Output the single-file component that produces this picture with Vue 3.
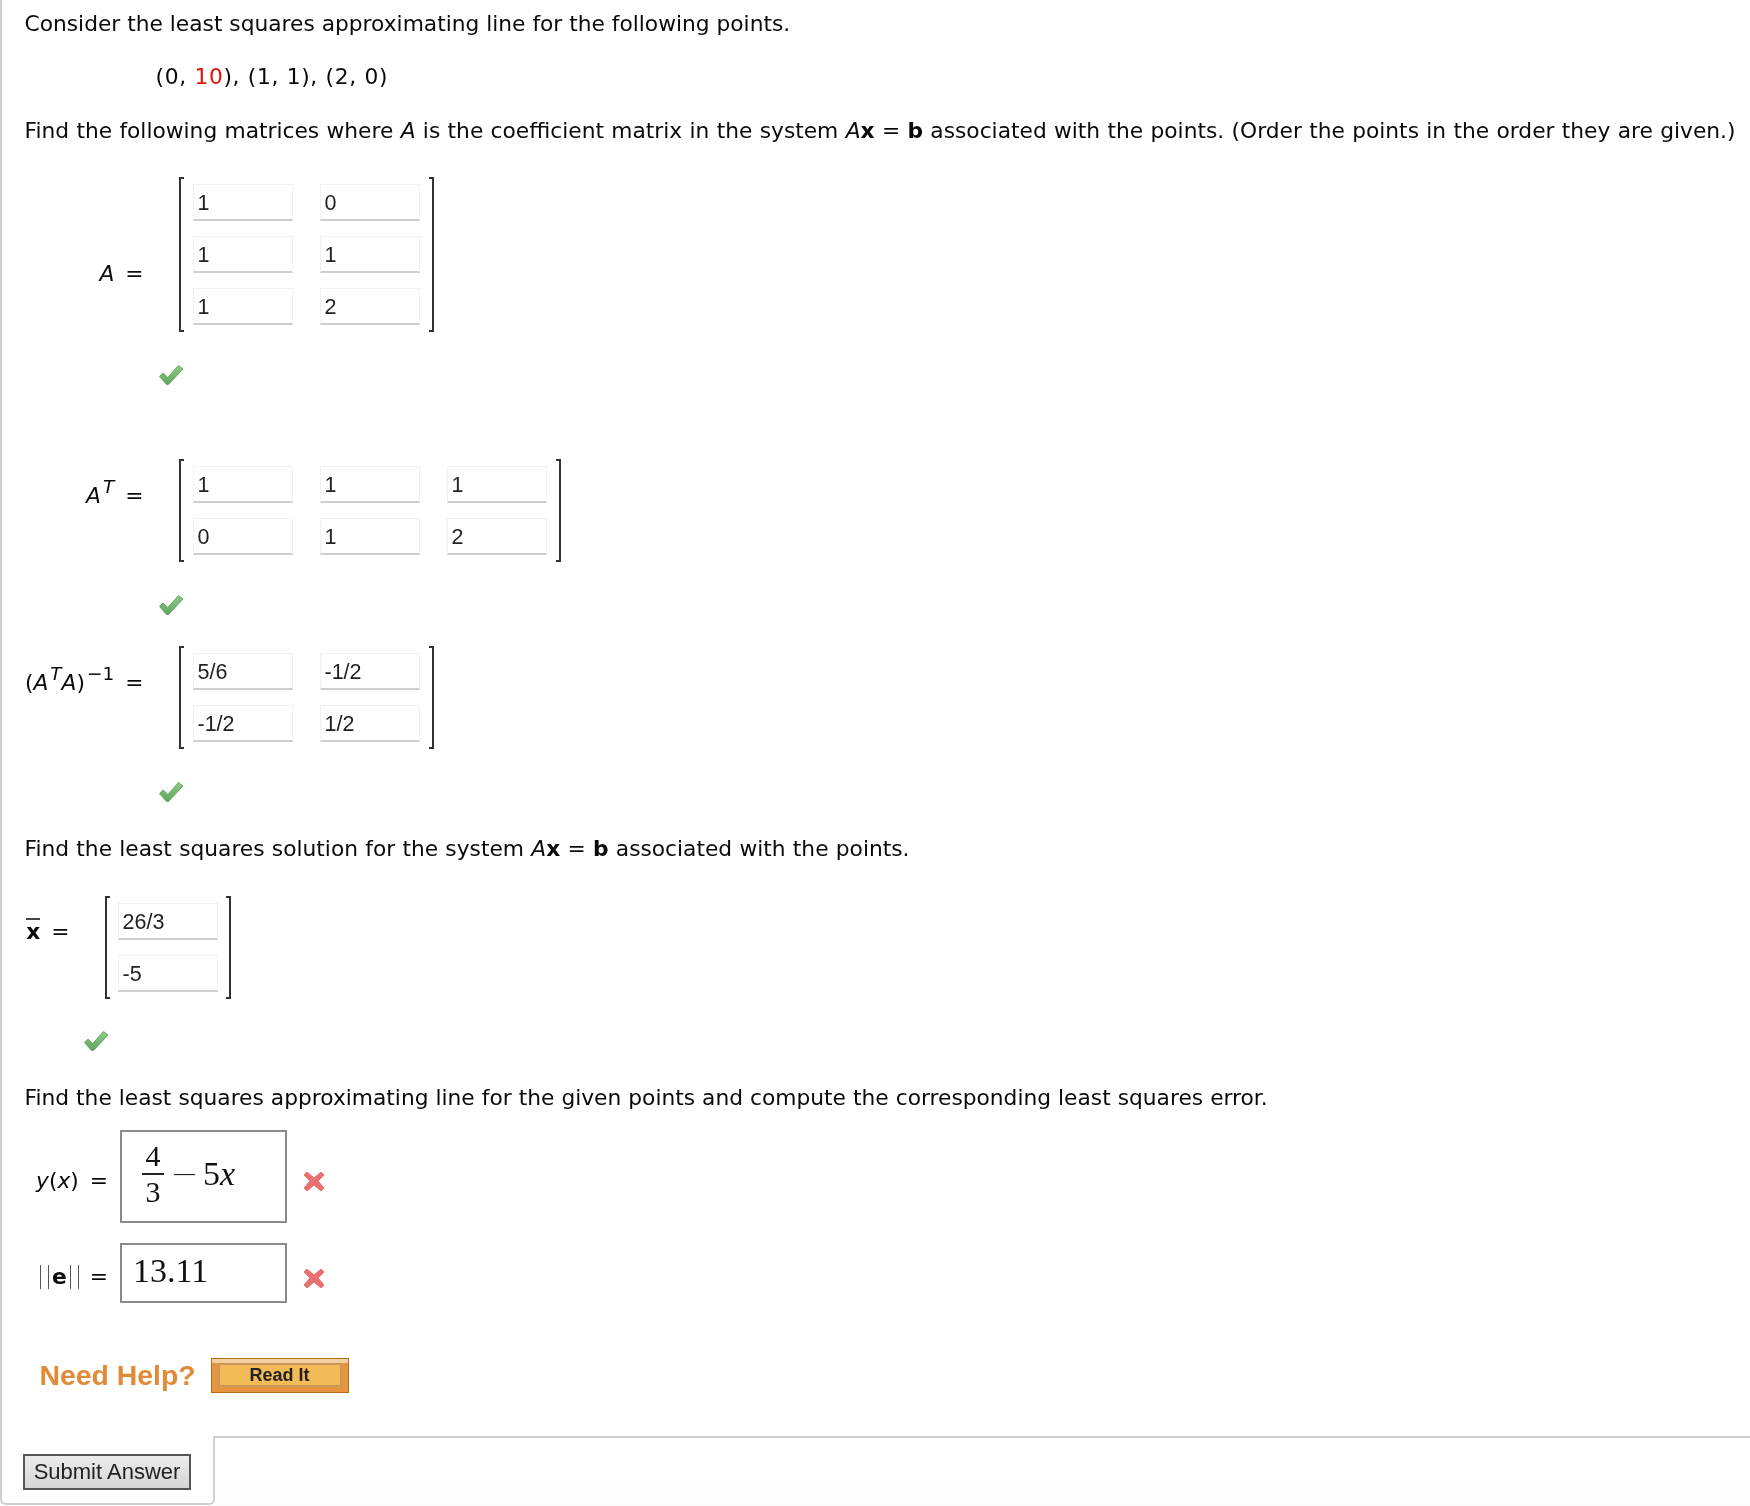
<script setup>
const matrices = [
  { id: 'a', cols: 2, rows: [['1', '0'], ['1', '1'], ['1', '2']], cls: 'ma' },
  { id: 't', cols: 3, rows: [['1', '1', '1'], ['0', '1', '2']], cls: 'mt' },
  { id: 'i', cols: 2, rows: [['5/6', '-1/2'], ['-1/2', '1/2']], cls: 'mi' },
]
</script>

<template>
  <div class="page">
    <svg class="defs" width="0" height="0" aria-hidden="true">
      <defs>
        <linearGradient id="checkFill" x1="0" y1="0" x2="0" y2="1">
          <stop offset="0" stop-color="#8fcb88" />
          <stop offset="1" stop-color="#5fa65d" />
        </linearGradient>
      </defs>
    </svg>
    <main class="main">
      <p class="line first">Consider the least squares approximating line for the following points.</p>
      <p class="line points">(0, <span class="red">10</span>), (1, 1), (2, 0)</p>
      <p class="line long">Find the following matrices where <i>A</i> is the coefficient matrix in the system <i>A</i><b>x</b> = <b>b</b> associated with the points. (Order the points in the order they are given.)</p>

      <section v-for="m in matrices" :key="m.id" class="block" :class="m.cls">
        <div class="row">
          <div class="label wide">
            <template v-if="m.id === 'a'"><i>A</i></template>
            <template v-else-if="m.id === 't'"><i>A</i><sup class="sup"><i>T</i></sup></template>
            <template v-else>(<i>A</i><sup class="sup"><i>T</i></sup><i>A</i>)<sup class="sup">−1</sup></template>
            <span class="eq">=</span>
          </div>
          <div class="matrix">
            <span class="lb"></span>
            <div class="cells" :style="{ gridTemplateColumns: `repeat(${m.cols}, 100px)` }">
              <template v-for="(r, ri) in m.rows" :key="ri">
                <div v-for="(c, ci) in r" :key="ci" class="cell">{{ c }}</div>
              </template>
            </div>
            <span class="rb"></span>
          </div>
        </div>
        <svg class="check wide-check" viewBox="0 0 26 22" width="26" height="22">
          <path d="M1.5 12.5 L5 9 L9.8 13.5 L20.5 1.5 L25 5 L10.5 20.5 L8.5 20.5 Z" fill="url(#checkFill)" stroke="#66a864" stroke-width="1" stroke-linejoin="round" />
        </svg>
      </section>

      <p class="line h2">Find the least squares solution for the system <i>A</i><b>x</b> = <b>b</b> associated with the points.</p>

      <section class="block mx">
        <div class="row">
          <div class="label narrow"><b class="xbar">x</b><span class="eq">=</span></div>
          <div class="matrix">
            <span class="lb"></span>
            <div class="cells" style="grid-template-columns: 100px">
              <div class="cell">26/3</div>
              <div class="cell">-5</div>
            </div>
            <span class="rb"></span>
          </div>
        </div>
        <svg class="check narrow-check" viewBox="0 0 26 22" width="26" height="22">
          <path d="M1.5 12.5 L5 9 L9.8 13.5 L20.5 1.5 L25 5 L10.5 20.5 L8.5 20.5 Z" fill="url(#checkFill)" stroke="#66a864" stroke-width="1" stroke-linejoin="round" />
        </svg>
      </section>

      <p class="line h3">Find the least squares approximating line for the given points and compute the corresponding least squares error.</p>

      <div class="answer first-answer">
        <div class="alabel"><i>y</i>(<i>x</i>)<span class="eq">=</span></div>
        <div class="box tall">
          <span class="frac"><span class="num">4</span><span class="den">3</span></span>
          <span class="minus">—</span>
          <span class="mathtext">5<i>x</i></span>
        </div>
        <svg class="cross" viewBox="0 0 24 24" width="24" height="24">
          <path d="M5 3 L12 9 L19 3 L22 6 L16 12 L22 19 L19 22 L12 16 L5 22 L2 19 L8 12 L2 6 Z" fill="#ea6f6f" stroke="#ea6f6f" stroke-linejoin="round" />
        </svg>
      </div>

      <div class="answer second-answer">
        <div class="alabel"><span class="bars"></span><b>e</b><span class="bars"></span><span class="eq">=</span></div>
        <div class="box short"><span class="mathtext big">13.11</span></div>
        <svg class="cross" viewBox="0 0 24 24" width="24" height="24">
          <path d="M5 3 L12 9 L19 3 L22 6 L16 12 L22 19 L19 22 L12 16 L5 22 L2 19 L8 12 L2 6 Z" fill="#ea6f6f" stroke="#ea6f6f" stroke-linejoin="round" />
        </svg>
      </div>

      <div class="help">
        <span class="need">Need Help?</span>
        <span class="readit"><span class="readit-inner">Read It</span></span>
      </div>
    </main>

    <footer class="footer">
      <div class="foot-left"><button class="submit" type="button">Submit Answer</button></div>
      <div class="foot-right"></div>
    </footer>
  </div>
</template>

<style>
html, body { margin: 0; background: #fff; }
</style>

<style scoped>
.page {
  width: 1750px;
  height: 1506px;
  overflow: hidden;
  background: #fff;
  color: #0a0a0a;
  font-family: "DejaVu Sans", sans-serif;
  font-size: 21.76px;
  filter: blur(0.35px);
}
.defs { display: block; height: 0; }
.main {
  height: 1436px;
  box-sizing: border-box;
  border-left: 2px solid #cfcfcf;
  padding-left: 22.5px;
  overflow: hidden;
}
.line {
  margin: 0;
  height: 30px;
  line-height: 30px;
  white-space: nowrap;
}
.first { margin-top: 9px; }
.points { margin: 23px 0 0 131px; letter-spacing: 0.68px; }
.long { margin-top: 24px; word-spacing: 0.41px; }
.red { color: #e0140c; }

.block { display: flex; flex-direction: column; }
.ma { margin-top: 31px; }
.mt { margin-top: 73px; }
.mi { margin-top: 30px; }
.mx { margin-top: 32px; }

.row { display: flex; align-items: flex-start; }
.label {
  display: flex;
  justify-content: flex-end;
  align-items: baseline;
  margin-right: 35.5px;
  line-height: 30px;
  white-space: pre;
  padding-top: 22px;
}
.ma .label { padding-top: 82px; }
.mx .label { padding-top: 21px; }
.wide { width: 119px; }
.narrow { width: 45px; }
.eq { margin-left: 11px; font-style: normal; }
.xbar { position: relative; }
.xbar::before {
  content: "";
  position: absolute;
  left: 0;
  right: 0;
  top: 1px;
  border-top: 2px solid #444;
}
.sup {
  font-size: 18.5px;
  line-height: 0;
  position: relative;
  top: -10px;
  margin-left: 2px;
}
.matrix { display: flex; align-items: stretch; }
.lb, .rb {
  width: 5px;
  border: 2px solid #333;
  box-sizing: border-box;
}
.lb { border-right: none; }
.rb { border-left: none; }
.cells {
  display: grid;
  column-gap: 27px;
  row-gap: 15px;
  padding: 7px 9px;
}
.mx .cells { padding: 7px 8px; }
.cell {
  height: 37px;
  box-sizing: border-box;
  padding-left: 3.5px;
  line-height: 37px;
  background: #fff;
  border: 1px solid #f1f1f1;
  border-bottom: 2px solid #cfcfcf;
  font-family: "Liberation Sans", sans-serif;
  font-size: 21.5px;
  color: #222;
}
.check { display: block; }
.wide-check { margin: 32px 0 0 133px; }
.narrow-check { margin: 31px 0 0 58px; }

.h2 { margin-top: 31px; word-spacing: 0.35px; }
.h3 { margin-top: 31px; word-spacing: 0.1px; }

.answer { display: flex; align-items: center; }
.first-answer { margin-top: 17px; }
.second-answer { margin-top: 20px; }
.alabel {
  width: 83.5px;
  margin-right: 12px;
  display: flex;
  justify-content: flex-end;
  align-items: center;
  white-space: pre;
  padding-top: 7px;
}
.alabel b { margin: 0 3px; }
.bars {
  width: 9px;
  height: 24px;
  border-left: 1px solid #555;
  border-right: 1px solid #555;
  box-sizing: border-box;
}
.box {
  width: 167px;
  box-sizing: border-box;
  border: 2px solid #8a8a8a;
  background: #fff;
  font-family: "Liberation Serif", serif;
  color: #111;
  display: flex;
  align-items: center;
}
.tall { height: 93px; padding: 0 0 6px 20px; }
.short { height: 60px; padding: 0 0 4px 11px; }
.frac {
  display: inline-flex;
  flex-direction: column;
  align-items: center;
  font-size: 30px;
  line-height: 34px;
  width: 22px;
}
.num { border-bottom: 2px solid #222; width: 100%; text-align: center; height: 34px; }
.den { width: 100%; text-align: center; }
.minus { font-size: 21px; margin: 0 8px 0 10px; line-height: 1; }
.mathtext { font-size: 34px; }
.big { font-size: 34px; }
.cross { display: block; margin-left: 15px; margin-top: 9px; }

.help { display: flex; align-items: center; margin: 55px 0 0 15px; }
.need {
  font-family: "Liberation Sans", sans-serif;
  font-weight: 700;
  font-size: 28.4px;
  color: #e28a35;
  width: 171px;
}
.readit {
  display: block;
  width: 138px;
  height: 35px;
  box-sizing: border-box;
  border: 1px solid #b0701a;
  background: linear-gradient(#f5cfa0 0 4px, #e5953f 4px);
  padding: 4px 6px 5px;
}
.readit-inner {
  display: block;
  height: 100%;
  box-sizing: border-box;
  border: 2px solid #c8975a;
  background: #f2bb58;
  font-family: "Liberation Sans", sans-serif;
  font-weight: 700;
  font-size: 18px;
  line-height: 21px;
  text-align: center;
  color: #222;
}

.footer { display: flex; height: 70px; }
.foot-left {
  width: 215px;
  height: 69px;
  box-sizing: border-box;
  border-left: 2px solid #cfcfcf;
  border-right: 2px solid #cfcfcf;
  border-bottom: 2px solid #cfcfcf;
  border-radius: 0 0 6px 6px;
  padding: 18px 0 0 21px;
}
.foot-right {
  flex: 1;
  border-top: 2px solid #cfcfcf;
  background: linear-gradient(#fff 60%, #fcfcfc);
}
.submit {
  display: block;
  width: 168px;
  height: 36px;
  box-sizing: border-box;
  border: 2px solid #555;
  border-radius: 0;
  padding: 0;
  background: linear-gradient(#ececec, #d6d6d6);
  font-family: "Liberation Sans", sans-serif;
  font-size: 22px;
  color: #222;
}
</style>
